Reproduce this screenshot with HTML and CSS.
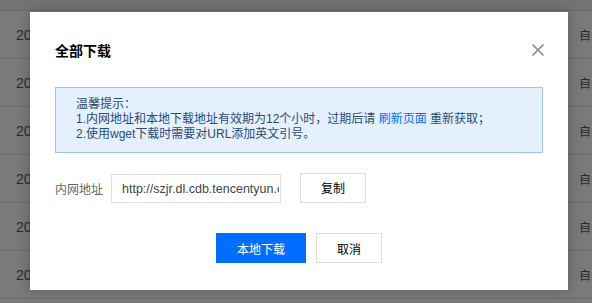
FILE: index.html
```html
<!DOCTYPE html>
<html lang="zh-CN">

<head>
    <meta charset="UTF-8">
    <meta name="viewport" content="width=device-width, initial-scale=1.0">
    <title>全部下载</title>
    <link rel="stylesheet" href="styles.css">
</head>

<body>

    <div class="table">
        <div class="table_head"></div>
        <div class="row"><span>20</span><span>自</span></div>
        <div class="row"><span>20</span><span>自</span></div>
        <div class="row"><span>20</span><span>自</span></div>
        <div class="row"><span>20</span><span>自</span></div>
        <div class="row"><span>20</span><span>自</span></div>
        <div class="row"><span>20</span><span>自</span></div>
    </div>

    <div class="dialog">
        <div class="dialog_head">
            <h2>全部下载</h2>
            <svg class="close" width="14" height="14" viewBox="0 0 14 14">
                <path d="M1.5 1.5 L12.5 12.5 M12.5 1.5 L1.5 12.5" stroke="#888" stroke-width="1.6" />
            </svg>
        </div>

        <div class="tips">
            <p>温馨提示：</p>
            <p>1.内网地址和本地下载地址有效期为12个小时，过期后请 <a href="#">刷新页面</a> 重新获取；</p>
            <p>2.使用wget下载时需要对URL添加英文引号。</p>
        </div>

        <div class="field">
            <label for="addr">内网地址</label>
            <input type="text" id="addr" value="http://szjr.dl.cdb.tencentyun.com/download" readonly>
            <button class="btn">复制</button>
        </div>

        <div class="dialog_foot">
            <button class="btn btn_primary">本地下载</button>
            <button class="btn">取消</button>
        </div>
    </div>

</body>

</html>
```

FILE: styles.css
```css
body {
    font-family: "Liberation Sans", "Noto Sans CJK SC", sans-serif;
    font-size: 12px;
    margin: 0;
    padding: 0;
    width: 592px;
    height: 303px;
    overflow: hidden;
    background-color: #7a7a7a;
    position: relative;
}

.table_head {
    height: 10px;
    background-color: #737373;
    border-bottom: 1px solid #6b6b6b;
}

.row {
    height: 47px;
    border-bottom: 1px solid #6b6b6b;
    display: flex;
    justify-content: space-between;
    align-items: center;
    padding-left: 16px;
    padding-right: 1px;
    font-size: 14px;
    color: #2a2a2a;
}

.row span:last-child {
    font-size: 12px;
}

.dialog {
    position: absolute;
    left: 30px;
    top: 12px;
    width: 538px;
    height: 278px;
    box-sizing: border-box;
    background-color: #fff;
    padding: 28px 25px 0 25px;
    box-shadow: 0 0 12px rgba(0, 0, 0, 0.25);
}

.dialog_head {
    display: flex;
    justify-content: space-between;
    align-items: center;
    height: 20px;
}

.dialog_head h2 {
    margin: 0;
    font-size: 14px;
    font-weight: 600;
    color: #000;
}

.close {
    margin-right: -2px;
}

.tips {
    margin-top: 27px;
    background-color: #e5f0fd;
    border: 1px solid #9dc7f1;
    padding: 9px 20px 10px 20px;
    color: #2b4a74;
    line-height: 15px;
}

.tips p {
    margin: 0;
}

.tips a {
    color: #006eff;
    text-decoration: none;
}

.field {
    display: flex;
    align-items: center;
    margin-top: 21px;
}

.field label {
    color: #666;
    width: 56px;
}

.field input {
    width: 170px;
    height: 29px;
    box-sizing: border-box;
    border: 1px solid #ddd;
    padding: 0 1px 0 10px;
    font-family: inherit;
    font-size: 12.5px;
    color: #444;
    outline: none;
}

.field .btn {
    margin-left: 19px;
    margin-top: -2px;
}

.btn {
    width: 66px;
    height: 30px;
    box-sizing: border-box;
    border: 1px solid #ddd;
    background-color: #fff;
    font-family: inherit;
    font-size: 12px;
    color: #000;
    padding: 0;
}

.btn_primary {
    width: 90px;
    border-color: #006eff;
    background-color: #006eff;
    color: #fff;
}

.dialog_foot {
    display: flex;
    justify-content: center;
    gap: 10px;
    margin-top: 30px;
}
```
